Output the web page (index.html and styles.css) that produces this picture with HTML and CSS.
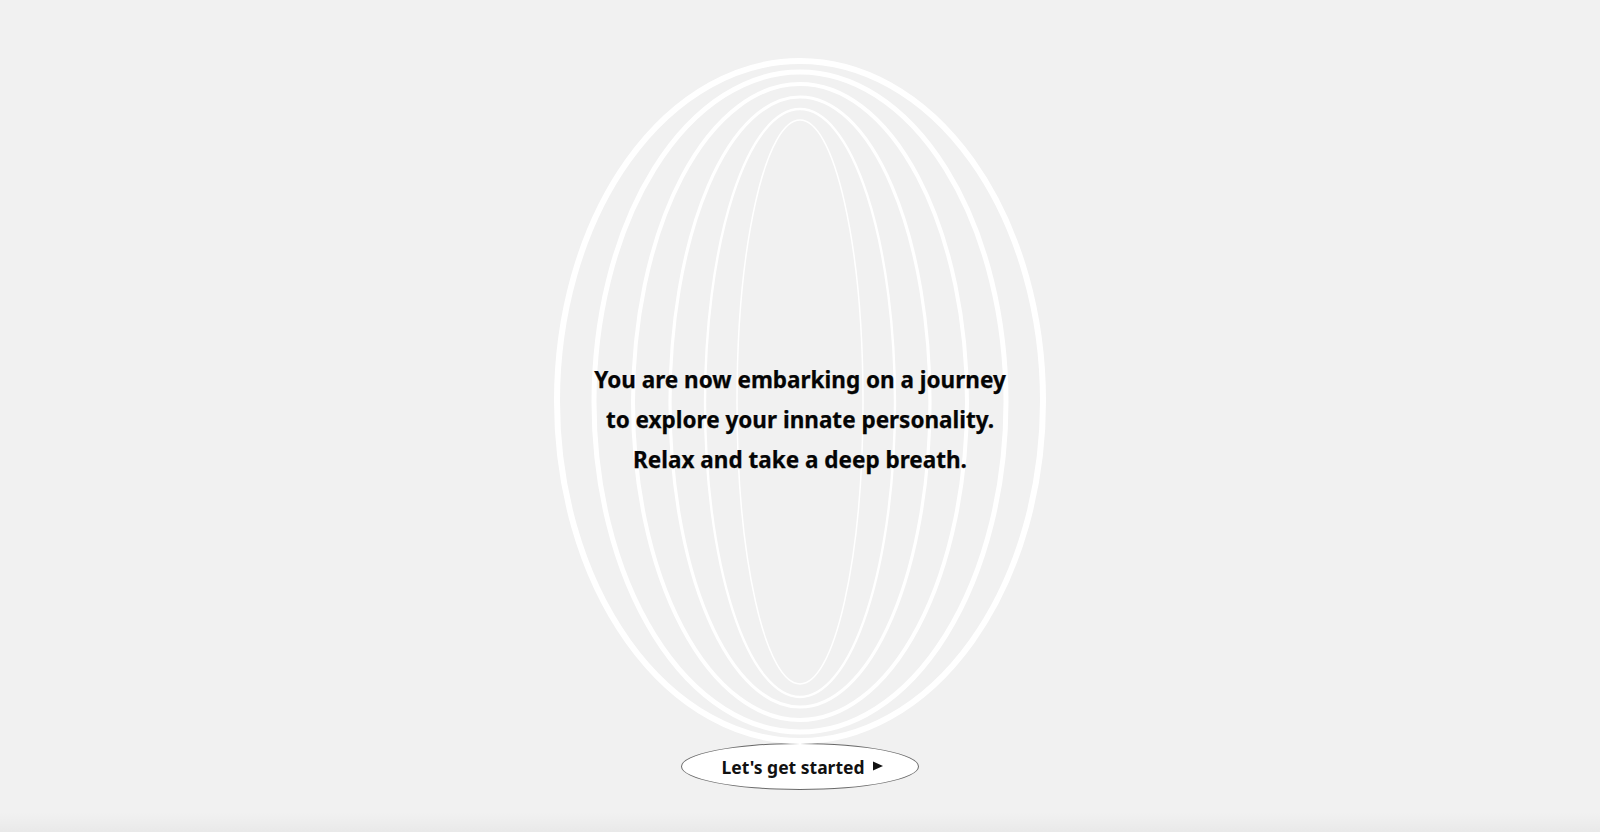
FILE: index.html
```html
<!DOCTYPE html>
<html lang="en">
<head>
<meta charset="utf-8">
<title>Journey</title>
<link rel="stylesheet" href="styles.css">
</head>
<body>
<main class="page">
  <section class="orb">
    <svg class="rings" width="500" height="688" viewBox="0 0 500 688" aria-hidden="true">
      <g fill="none" stroke="#ffffff">
        <ellipse cx="250" cy="345" rx="243" ry="340" stroke-width="6"/>
        <ellipse cx="250" cy="346" rx="206" ry="330" stroke-width="5"/>
        <ellipse cx="250" cy="346" rx="167" ry="318" stroke-width="4"/>
        <ellipse cx="250" cy="346" rx="130" ry="305" stroke-width="3.2"/>
        <ellipse cx="250" cy="347" rx="95" ry="294" stroke-width="2.4"/>
        <ellipse cx="250" cy="346" rx="63" ry="282" stroke-width="1.5"/>
      </g>
    </svg>
    <p class="message">You are now embarking on a journey<br>to explore your innate personality.<br>Relax and take a deep breath.</p>
  </section>
  <button class="cta" type="button">Let's get started <svg class="tri" width="10" height="10" viewBox="0 0 10 10" aria-hidden="true"><path d="M0 0.5 L10 5 L0 9.5 Z" fill="#111"/></svg></button>
</main>
<div class="shade"></div>
</body>
</html>
```

FILE: styles.css
```css
html, body {
  margin: 0;
  padding: 0;
}
body {
  background: #f1f1f1;
  font-family: "Noto Sans", "Open Sans", sans-serif;
  color: #111;
  height: 832px;
  overflow: hidden;
  position: relative;
}
.page {
  display: flex;
  flex-direction: column;
  align-items: center;
  padding-top: 56px;
}
.orb {
  position: relative;
  width: 500px;
  height: 688px;
}
.rings {
  display: block;
}
.message {
  position: absolute;
  top: 304px;
  left: -50px;
  right: -50px;
  margin: 0;
  text-align: center;
  font-size: 22.5px;
  font-weight: 700;
  line-height: 40px;
  letter-spacing: 0;
  color: #050505;
  -webkit-text-stroke: 0.25px #050505;
}
.cta {
  margin-top: -1px;
  width: 238px;
  height: 47px;
  border-radius: 50%;
  border: 1px solid #6a6a6a;
  background: #ffffff;
  font-family: "Noto Sans", "Open Sans", sans-serif;
  font-weight: 700;
  font-size: 17.5px;
  color: #111;
  display: flex;
  align-items: center;
  justify-content: center;
  gap: 8px;
  padding: 0 0 0 4px;
  cursor: pointer;
}
.tri {
  display: block;
  margin-top: -1px;
}
.shade {
  position: absolute;
  left: 0;
  right: 0;
  bottom: 0;
  height: 20px;
  background: linear-gradient(to bottom, rgba(0,0,0,0) 0%, rgba(0,0,0,0.012) 40%, rgba(0,0,0,0.035) 100%);
}
```
